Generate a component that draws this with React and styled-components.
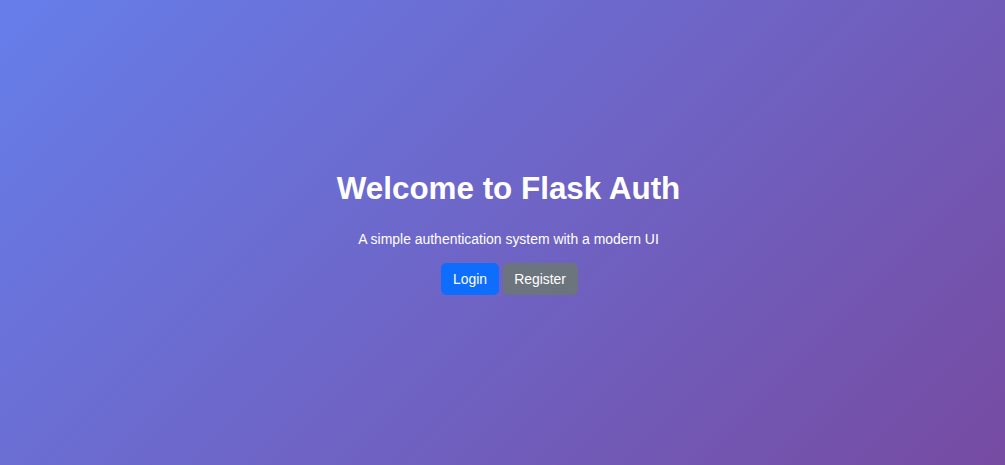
import React from "react";
import styled, { createGlobalStyle } from "styled-components";

const Global = createGlobalStyle`
  html, body { margin: 0; padding: 0; }
  body {
    font-family: "Liberation Sans", Arial, sans-serif;
    -webkit-font-smoothing: antialiased;
  }
  * { box-sizing: border-box; }
`;

const Page = styled.div`
  min-height: 100vh;
  width: 100%;
  background: linear-gradient(135deg, #667eea 0%, #764ba2 100%);
  display: flex;
  align-items: center;
  justify-content: center;
  padding-left: 12px;
`;

const Hero = styled.div`
  display: flex;
  flex-direction: column;
  align-items: center;
  text-align: center;
  color: #fff;
`;

const Title = styled.h1`
  margin: 0 0 20.9px;
  font-size: 31.4px;
  line-height: 1.2;
  font-weight: 700;
  color: #fff;
`;

const Subtitle = styled.p`
  margin: 0 0 13.5px;
  font-size: 13.95px;
  line-height: 1.5;
  color: #fff;
`;

const Actions = styled.div`
  display: flex;
  gap: 4px;
  padding-left: 2px;
`;

const Button = styled.a`
  display: inline-block;
  font-size: 13.9px;
  line-height: 20px;
  padding: 5px 10.6px;
  border: 1px solid ${(p) => p.$bg};
  border-radius: 5.2px;
  background: ${(p) => p.$bg};
  color: #fff;
  text-decoration: none;
  cursor: pointer;
`;

export default function App() {
  return (
    <>
      <Global />
      <Page>
        <Hero>
          <Title>Welcome to Flask Auth</Title>
          <Subtitle>A simple authentication system with a modern UI</Subtitle>
          <Actions>
            <Button $bg="#0d6efd" href="#">Login</Button>
            <Button $bg="#6c757d" href="#">Register</Button>
          </Actions>
        </Hero>
      </Page>
    </>
  );
}
